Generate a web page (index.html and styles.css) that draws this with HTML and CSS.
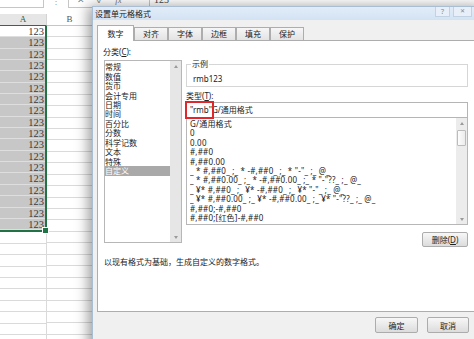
FILE: index.html
```html
<!DOCTYPE html>
<html lang="zh-CN">
<head>
    <meta charset="UTF-8">
    <meta name="viewport" content="width=device-width, initial-scale=1.0">
    <title>设置单元格格式</title>
    <link rel="stylesheet" href="styles.css">
</head>
<body>
    <div class="sheet">
        <div class="formula-bar">
            <div class="name-box"></div>
            <div class="dots">⋮</div>
            <div class="fx-box">
                <span>✕</span>
                <span>✓</span>
                <span class="fx">fx</span>
            </div>
            <div class="formula">123</div>
        </div>
        <div class="col-heads">
            <div class="head head-a">A</div>
            <div class="head head-b">B</div>
        </div>
        <div class="grid">
            <div class="col col-a">
                <div class="selection">
                    <div class="cell active">123</div>
                    <div class="cell">123</div>
                    <div class="cell">123</div>
                    <div class="cell">123</div>
                    <div class="cell">123</div>
                    <div class="cell">123</div>
                    <div class="cell">123</div>
                    <div class="cell">123</div>
                    <div class="cell">123</div>
                    <div class="cell">123</div>
                    <div class="cell">123</div>
                    <div class="cell">123</div>
                    <div class="cell">123</div>
                    <div class="cell">123</div>
                    <div class="cell">123</div>
                    <div class="cell">123</div>
                    <div class="cell">123</div>
                    <div class="cell">123</div>
                </div>
                <div class="cell blank"></div>
                <div class="cell blank"></div>
                <div class="cell blank"></div>
                <div class="cell blank"></div>
                <div class="cell blank"></div>
                <div class="cell blank"></div>
                <div class="cell blank"></div>
                <div class="cell blank"></div>
                <div class="cell blank"></div>
                <div class="cell blank"></div>
            </div>
            <div class="col col-b">
                <div class="cell blank"></div><div class="cell blank"></div><div class="cell blank"></div>
                <div class="cell blank"></div><div class="cell blank"></div><div class="cell blank"></div>
                <div class="cell blank"></div><div class="cell blank"></div><div class="cell blank"></div>
                <div class="cell blank"></div><div class="cell blank"></div><div class="cell blank"></div>
                <div class="cell blank"></div><div class="cell blank"></div><div class="cell blank"></div>
                <div class="cell blank"></div><div class="cell blank"></div><div class="cell blank"></div>
                <div class="cell blank"></div><div class="cell blank"></div><div class="cell blank"></div>
                <div class="cell blank"></div><div class="cell blank"></div><div class="cell blank"></div>
                <div class="cell blank"></div><div class="cell blank"></div><div class="cell blank"></div>
                <div class="cell blank"></div>
            </div>
        </div>
    </div>

    <div class="dialog">
        <div class="title-bar">
            <span class="title">设置单元格格式</span>
            <div class="title-btns">
                <span class="tbtn help">?</span>
                <span class="tbtn close">✕</span>
            </div>
        </div>
        <div class="dialog-body">
            <div class="tabs">
                <div class="tab selected">数字</div>
                <div class="tab">对齐</div>
                <div class="tab">字体</div>
                <div class="tab">边框</div>
                <div class="tab">填充</div>
                <div class="tab">保护</div>
            </div>
            <div class="panel">
                <div class="panel-top">
                    <div class="col-left">
                        <div class="label cat-label">分类(<u>C</u>):</div>
                        <div class="listbox cat-list">
                            <ul class="items">
                                <li>常规</li>
                                <li>数值</li>
                                <li>货币</li>
                                <li>会计专用</li>
                                <li>日期</li>
                                <li>时间</li>
                                <li>百分比</li>
                                <li>分数</li>
                                <li>科学记数</li>
                                <li>文本</li>
                                <li>特殊</li>
                                <li class="picked">自定义</li>
                            </ul>
                            <div class="vscroll disabled">
                                <span class="arrow up"></span>
                                <span class="arrow down"></span>
                            </div>
                        </div>
                    </div>
                    <div class="col-right">
                        <fieldset class="sample">
                            <legend>示例</legend>
                            <div class="sample-text">rmb123</div>
                        </fieldset>
                        <div class="label type-label">类型(<u>T</u>):</div>
                        <div class="type-input">"rmb"G/通用格式<span class="mark"></span></div>
                        <div class="listbox fmt-list">
                            <ul class="items">
                                <li>G/通用格式</li>
                                <li>0</li>
                                <li>0.00</li>
                                <li>#,##0</li>
                                <li>#,##0.00</li>
                                <li>_ * #,##0_ ;_ * -#,##0_ ;_ * "-"_ ;_ @_ </li>
                                <li>_ * #,##0.00_ ;_ * -#,##0.00_ ;_ * "-"??_ ;_ @_ </li>
                                <li>_ ¥* #,##0_ ;_ ¥* -#,##0_ ;_ ¥* "-"_ ;_ @_ </li>
                                <li>_ ¥* #,##0.00_ ;_ ¥* -#,##0.00_ ;_ ¥* "-"??_ ;_ @_ </li>
                                <li>#,##0;-#,##0</li>
                                <li>#,##0;[红色]-#,##0</li>
                            </ul>
                            <div class="vscroll">
                                <span class="arrow up"></span>
                                <span class="thumb"></span>
                                <span class="track"></span>
                                <span class="arrow down"></span>
                            </div>
                        </div>
                        <div class="del-row">
                            <button class="btn del-btn">删除(<u>D</u>)</button>
                        </div>
                    </div>
                </div>
                <p class="desc">以现有格式为基础，生成自定义的数字格式。</p>
            </div>
            <div class="footer">
                <button class="btn ok-btn">确定</button>
                <button class="btn cancel-btn">取消</button>
            </div>
        </div>
    </div>
</body>
</html>
```

FILE: styles.css
```css
* {
    box-sizing: border-box;
}
body {
    margin: 0;
    width: 474px;
    height: 339px;
    overflow: hidden;
    position: relative;
    background-color: #fff;
    font-family: "Noto Sans", "Noto Sans CJK SC", sans-serif;
    font-size: 8px;
    color: #222;
}

/* spreadsheet behind the dialog */
.sheet {
    width: 474px;
}
.formula-bar {
    display: flex;
    align-items: flex-end;
    height: 8px;
    overflow: hidden;
    background-color: #fff;
    color: #666;
}
.name-box {
    width: 44px;
    height: 8px;
    border-right: 1px solid #c6c6c6;
    border-bottom: 1px solid #c6c6c6;
}
.dots {
    width: 24px;
    height: 12px;
    line-height: 10px;
    text-align: center;
    font-size: 8px;
    color: #999;
}
.fx-box {
    display: flex;
    gap: 12px;
    width: 82px;
    height: 12px;
    padding-left: 8px;
    border: 1px solid #c6c6c6;
    border-top: none;
    line-height: 8px;
    font-size: 9px;
    color: #7a7a7a;
}
.fx-box .fx {
    font-family: "Liberation Serif", serif;
    font-style: italic;
}
.formula {
    height: 12px;
    padding-left: 4px;
    line-height: 8px;
    font-family: "Liberation Serif", serif;
    font-size: 10px;
    color: #444;
}
.col-heads {
    display: flex;
    height: 18px;
    padding-top: 6px;
    background-color: #fff;
}
.head {
    height: 12px;
    line-height: 11px;
    text-align: center;
    font-family: "Liberation Serif", serif;
    font-size: 9px;
    color: #555;
    border-bottom: 1px solid #c6c6c6;
    border-right: 1px solid #d4d4d4;
}
.head-a {
    width: 47px;
    background-color: #e6e6e6;
    color: #2c5f3f;
    border-bottom: 1px solid #217346;
}
.head-b {
    width: 46px;
}
.grid {
    display: flex;
}
.col-a {
    width: 47px;
}
.col-b {
    width: 46px;
}
.cell {
    height: 11.45px;
    border-bottom: 1px solid #dadada;
    border-right: 1px solid #dadada;
    padding-right: 3px;
    text-align: right;
    line-height: 11px;
    font-family: "Liberation Serif", serif;
    font-size: 10.5px;
    color: #3a3a3a;
}
.selection {
    position: relative;
    border-right: 2px solid #217346;
    border-bottom: 2px solid #217346;
}
.selection .cell {
    height: 11.35px;
    border-right: none;
    border-bottom: 1px solid #dedede;
    padding-right: 1px;
    background-color: #c7c7c7;
}
.selection .cell.active {
    background-color: #fff;
}
.selection::after {
    content: "";
    position: absolute;
    right: -4px;
    bottom: -4px;
    width: 5px;
    height: 5px;
    background-color: #217346;
    border: 1px solid #fff;
}

/* dialog window */
.dialog {
    position: absolute;
    left: 92px;
    top: 6px;
    width: 392px;
    height: 345px;
    background-color: #f0f0f0;
    border: 1px solid #a9bdd3;
    border-right: none;
    box-shadow: -4px 0 12px rgba(0, 0, 0, 0.38);
}
.title-bar {
    display: flex;
    justify-content: space-between;
    align-items: flex-start;
    height: 13px;
    padding-left: 2px;
    padding-right: 12px;
    background: linear-gradient(#e2ecf8, #d3e3f4);
}
.title {
    line-height: 13px;
    color: #1a1a1a;
}
.title-btns {
    display: flex;
    gap: 3px;
}
.tbtn {
    height: 10px;
    line-height: 9px;
    text-align: center;
    font-size: 7px;
    color: #7d8a99;
    background-color: #e8eff8;
    border: 1px solid #c3d2e2;
    border-top: none;
}
.tbtn.help {
    width: 15px;
}
.tbtn.close {
    width: 19px;
    font-size: 6px;
}
.dialog-body {
    padding-left: 4px;
}
.tabs {
    display: flex;
    align-items: flex-end;
    height: 20px;
}
.tab {
    width: 34px;
    height: 13px;
    line-height: 12px;
    text-align: center;
    background: linear-gradient(#f6f6f6, #e3e3e3);
    border: 1px solid #adadad;
    border-bottom: none;
    color: #222;
}
.tab.selected {
    position: relative;
    z-index: 1;
    width: 37px;
    height: 16px;
    line-height: 15px;
    margin-bottom: -1px;
    background: #fff;
}
.panel {
    width: 380px;
    height: 272px;
    background-color: #fff;
    border: 1px solid #adadad;
}
.panel-top {
    display: flex;
    gap: 4px;
    padding-left: 6px;
}
.label {
    line-height: 10px;
    color: #222;
}
.col-left {
    padding-top: 6px;
}
.cat-label {
    margin-left: -1px;
}
.listbox {
    display: flex;
    background-color: #fff;
    border: 1px solid #b7b7b7;
}
.items {
    flex: 1;
    margin: 0;
    padding: 1.3px 0 0;
    list-style: none;
    overflow: hidden;
}
.items li {
    height: 9.45px;
    line-height: 9.45px;
    white-space: pre;
}
.cat-list {
    width: 78px;
    height: 183px;
    margin-top: 3px;
}
.cat-list .items li.picked {
    background-color: #a9a9a9;
    color: #fff;
}
.vscroll {
    display: flex;
    flex-direction: column;
    justify-content: space-between;
    width: 11px;
    background-color: #ececec;
}
.vscroll.disabled {
    background-color: #e6e6e6;
}
.arrow {
    display: flex;
    align-items: center;
    justify-content: center;
    height: 10px;
}
.arrow::before {
    content: "";
    border-left: 2.5px solid transparent;
    border-right: 2.5px solid transparent;
}
.arrow.up::before {
    border-bottom: 3px solid #9a9a9a;
}
.arrow.down::before {
    border-top: 3px solid #9a9a9a;
}
.col-right {
    width: 282px;
    padding-top: 18px;
}
.sample {
    margin: 0;
    min-width: 0;
    padding: 5px 4px 2px 4px;
    border: 1px solid #d6d6d6;
}
.sample legend {
    padding: 0 1px;
    line-height: 10px;
}
.sample-text {
    padding-left: 2px;
    line-height: 10px;
}
.type-label {
    margin-top: 4px;
}
.type-input {
    position: relative;
    height: 16px;
    margin-top: 1px;
    padding-left: 3px;
    line-height: 14px;
    border: 1px solid #b5b5b5;
    background-color: #fff;
}
.mark {
    position: absolute;
    left: -2px;
    top: -2px;
    width: 29px;
    height: 18px;
    border: 2px solid #e0272c;
}
.fmt-list {
    height: 107px;
    border-top: none;
    padding-left: 3px;
}
.fmt-list .items {
    padding-top: 0.8px;
    letter-spacing: 0.2px;
}
.fmt-list .vscroll {
    justify-content: flex-start;
}
.thumb {
    height: 16px;
    margin: 2px 1px 0;
    background: linear-gradient(to right, #fdfdfd, #ececec);
    border: 1px solid #bcbcbc;
    border-radius: 1px;
}
.track {
    flex: 1;
}
.del-row {
    display: flex;
    justify-content: flex-end;
    margin-top: 7px;
}
.btn {
    height: 16px;
    padding: 0;
    font-family: "Noto Sans", "Noto Sans CJK SC", sans-serif;
    font-size: 8px;
    line-height: 13px;
    color: #222;
    background: linear-gradient(#f7f7f7, #dcdcdc);
    border: 1px solid #acacac;
    border-radius: 2px;
}
.del-btn {
    width: 46px;
    height: 15px;
}
.desc {
    margin: 10px 0 0;
    padding-left: 6px;
    line-height: 10px;
    color: #222;
}
.footer {
    display: flex;
    justify-content: flex-end;
    gap: 9px;
    padding-top: 5px;
    padding-right: 15px;
}
.ok-btn {
    width: 43px;
}
.cancel-btn {
    width: 42px;
}
```
